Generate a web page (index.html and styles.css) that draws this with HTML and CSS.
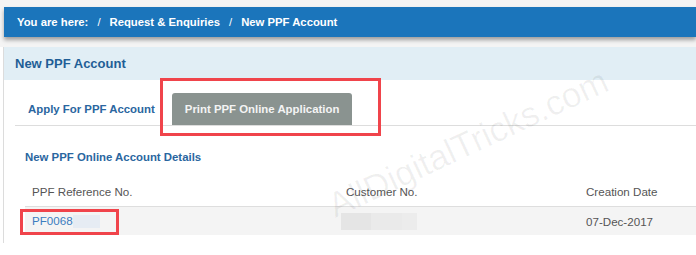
FILE: index.html
```html
<!DOCTYPE html>
<html>
<head>
<meta charset="utf-8">
<link rel="stylesheet" href="styles.css">
</head>
<body>
<div class="top">
  <div class="crumbs">
    <span>You are here:</span><span class="sep">/</span><span>Request &amp; Enquiries</span><span class="sep">/</span><span>New PPF Account</span>
  </div>
</div>
<div class="panel">
  <div class="panel-head">New PPF Account</div>
  <div class="panel-body">
    <div class="tabs">
      <div class="tab">Apply For PPF Account</div>
      <div class="tab active">Print PPF Online Application</div>
      <div class="mark mark-tab"></div>
    </div>
    <div class="section-title">New PPF Online Account Details</div>
    <table class="grid">
      <thead>
        <tr><th class="c1">PPF Reference No.</th><th class="c2">Customer No.</th><th>Creation Date</th></tr>
      </thead>
      <tbody>
        <tr>
          <td class="c1 ref"><a class="link">PF0068</a><span class="blur blur-ref"></span><div class="mark mark-ref"></div></td>
          <td class="c2"><span class="blur blur-cust"></span></td>
          <td>07-Dec-2017</td>
        </tr>
      </tbody>
    </table>
  </div>
  <div class="watermark">AllDigitalTricks.com</div>
</div>
</body>
</html>
```
FILE: styles.css
```css
html, body {
  margin: 0;
  padding: 0;
  background: #ffffff;
  font-family: "Liberation Sans", Arial, sans-serif;
  overflow: hidden;
}
.top {
  background: #f4f4f4;
  padding: 7px 0 10px 4px;
}
.crumbs {
  height: 30px;
  line-height: 30px;
  background: #1b75bb;
  color: #ffffff;
  font-weight: bold;
  font-size: 11.3px;
  padding-left: 13px;
  box-shadow: 0 3px 4px rgba(0, 0, 0, 0.35);
  white-space: nowrap;
}
.sep {
  font-weight: normal;
  margin: 0 9px;
}
.panel {
  position: relative;
  margin-left: 3px;
  border-left: 1px solid #dcdcdc;
  padding-bottom: 8px;
  overflow: hidden;
}
.panel-head {
  height: 33px;
  line-height: 33px;
  background: #e1eef5;
  color: #1f5e96;
  font-weight: bold;
  font-size: 13px;
  padding-left: 11px;
}
.panel-body {
  padding-left: 11px;
}
.tabs {
  position: relative;
  display: flex;
  align-items: flex-end;
  padding-top: 13px;
  border-bottom: 1px solid #dddddd;
  height: 32px;
}
.tab {
  height: 32px;
  line-height: 32px;
  font-weight: bold;
  font-size: 11.4px;
  color: #2a66a0;
  padding: 0 14px 0 13px;
  margin-right: 3px;
  white-space: nowrap;
}
.tab.active {
  background: #8a9390;
  color: #f4f4f4;
  border-radius: 3px 3px 0 0;
  padding: 0 13px;
}
.mark {
  position: absolute;
  border: 3px solid #f0444b;
  box-sizing: border-box;
}
.mark-tab {
  left: 145px;
  top: -2px;
  width: 221px;
  height: 58px;
}
.section-title {
  margin: 24px 0 0 10px;
  line-height: 14px;
  font-weight: bold;
  font-size: 11.4px;
  color: #2a66a0;
}
.grid {
  margin: 12px 0 0 10px;
  border-collapse: collapse;
  width: 1000px;
  font-size: 11.6px;
  color: #555555;
}
.grid th {
  font-weight: normal;
  text-align: left;
  height: 30px;
  padding: 0 7px;
  white-space: nowrap;
}
.grid td {
  height: 28px;
  padding: 0 7px;
  background: #f4f4f4;
  border-top: 1px solid #dedede;
  white-space: nowrap;
}
.c1 { width: 300px; }
.c2 { width: 226px; }
.ref { position: relative; }
.link {
  color: #3b7dc0;
}
.blur {
  display: inline-block;
  vertical-align: middle;
}
.blur-ref {
  width: 27px;
  height: 13px;
  background: #e6ecf3;
}
.blur-cust {
  width: 76px;
  height: 17px;
  margin-left: -5px;
  background: linear-gradient(90deg, #e5e5e5 0 40%, #eaeaea 40% 80%, #ececec 80%);
}
.mark-ref {
  left: -5px;
  top: 2px;
  width: 99px;
  height: 26px;
}
.watermark {
  position: absolute;
  left: 312px;
  top: 76px;
  font-size: 35px;
  color: rgba(0, 0, 0, 0.06);
  transform: rotate(-25deg);
  transform-origin: center;
  white-space: nowrap;
  pointer-events: none;
}
```
